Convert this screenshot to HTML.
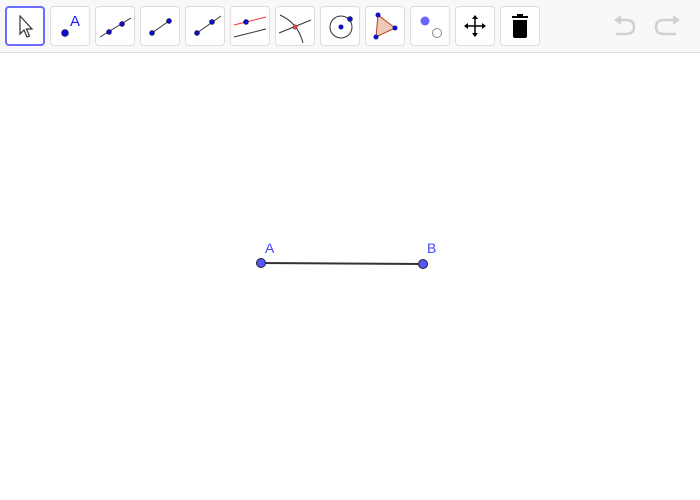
<!DOCTYPE html>
<html><head><style>
body{margin:0;width:700px;height:500px;background:#fff;font-family:"Liberation Sans",sans-serif;overflow:hidden;position:relative}
#tb{position:absolute;left:0;top:0;width:700px;height:52px;background:#f8f8f8;border-bottom:1px solid #ddd}
.b{position:absolute;top:6px;width:38px;height:38px;background:#fff;border:1px solid #ddd;border-radius:4px}
.b svg{position:absolute;left:0;top:0}
</style></head><body>
<div id="tb">
<div class="b" style="left:5px;border:2px solid #6b6bff;width:36px;height:36px;top:6px"><svg width="36" height="36"><path d="M13 8 L13 26 L17 22 L20 29 L22.5 28 L19.5 21 L25 21 Z" fill="#fff" stroke="#333" stroke-width="1.2"/></svg></div>
<div class="b" style="left:50px"><svg width="38" height="38"><circle cx="14" cy="26" r="3.5" fill="#1010cc" stroke="#000" stroke-width=".5"/><text x="19" y="19" fill="#1a1aff" font-size="15" font-family="Liberation Sans">A</text></svg></div>
<div class="b" style="left:95px"><svg width="38" height="38"><line x1="4" y1="30" x2="35" y2="11" stroke="#333"/><circle cx="13" cy="25" r="2.5" fill="#1010cc" stroke="#000" stroke-width=".5"/><circle cx="26" cy="17" r="2.5" fill="#1010cc" stroke="#000" stroke-width=".5"/></svg></div>
<div class="b" style="left:140px"><svg width="38" height="38"><line x1="11" y1="26" x2="28" y2="14" stroke="#333"/><circle cx="11" cy="26" r="2.5" fill="#1010cc" stroke="#000" stroke-width=".5"/><circle cx="28" cy="14" r="2.5" fill="#1010cc" stroke="#000" stroke-width=".5"/></svg></div>
<div class="b" style="left:185px"><svg width="38" height="38"><line x1="11" y1="26" x2="35" y2="9" stroke="#333"/><circle cx="11" cy="26" r="2.5" fill="#1010cc" stroke="#000" stroke-width=".5"/><circle cx="26" cy="15" r="2.5" fill="#1010cc" stroke="#000" stroke-width=".5"/></svg></div>
<div class="b" style="left:230px"><svg width="38" height="38"><line x1="3" y1="18" x2="35" y2="10" stroke="#e33"/><line x1="3" y1="30" x2="35" y2="22" stroke="#333"/><circle cx="15" cy="15" r="2.5" fill="#1010cc" stroke="#000" stroke-width=".5"/></svg></div>
<div class="b" style="left:275px"><svg width="38" height="38"><line x1="3" y1="26" x2="35" y2="13" stroke="#333"/><path d="M4 8 Q22 16 27 36" fill="none" stroke="#333"/><circle cx="19" cy="20" r="2.2" fill="#e44" stroke="#333" stroke-width=".5"/></svg></div>
<div class="b" style="left:320px"><svg width="38" height="38"><circle cx="20" cy="20" r="11" fill="none" stroke="#333"/><circle cx="20" cy="20" r="2.5" fill="#1010cc"/><circle cx="29" cy="12" r="2.5" fill="#1010cc" stroke="#000" stroke-width=".5"/></svg></div>
<div class="b" style="left:365px"><svg width="38" height="38"><path d="M12 8 L29 21 L10 30 Z" fill="#f0c8b8" stroke="#b04020"/><circle cx="12" cy="8" r="2.5" fill="#1010cc"/><circle cx="29" cy="21" r="2.5" fill="#1010cc"/><circle cx="10" cy="30" r="2.5" fill="#1010cc"/></svg></div>
<div class="b" style="left:410px"><svg width="38" height="38"><circle cx="14" cy="14" r="4.5" fill="#6666ff"/><circle cx="26" cy="26" r="4.5" fill="#fff" stroke="#888"/></svg></div>
<div class="b" style="left:455px"><svg width="38" height="38"><path d="M19 9 V29 M9 19 H29" stroke="#000" stroke-width="1.5"/><path d="M19 8 L16 12 H22Z M19 30 L16 26 H22Z M8 19 L12 16 V22Z M30 19 L26 16 V22Z" fill="#000"/></svg></div>
<div class="b" style="left:500px"><svg width="38" height="38"><rect x="11" y="9" width="16" height="2" fill="#000"/><rect x="16" y="7" width="6" height="2" fill="#000"/><path d="M12 13 H26 V29 Q26 31 24 31 H14 Q12 31 12 29Z" fill="#000"/></svg></div>
<svg style="position:absolute;left:612px;top:12px" width="70" height="28"><path d="M6 8 H14 Q22 8 22 15 Q22 22 14 22 H4" fill="none" stroke="#d0d0d0" stroke-width="2.5"/><path d="M2 8 L9 3 V13Z" fill="#d0d0d0"/><path d="M64 8 H52 Q44 8 44 15 Q44 22 52 22 H64" fill="none" stroke="#d0d0d0" stroke-width="2.5"/><path d="M68 8 L61 3 V13Z" fill="#d0d0d0"/></svg>
</div>
<svg style="position:absolute;left:0;top:0" width="700" height="500">
<line x1="261" y1="263" x2="423" y2="264" stroke="#333" stroke-width="2"/>
<circle cx="261" cy="263" r="4.5" fill="#5555ff" stroke="#222" stroke-width="1"/>
<circle cx="423" cy="264" r="4.5" fill="#5555ff" stroke="#222" stroke-width="1"/>
<text x="265" y="253" fill="#4444ff" font-size="14" font-family="Liberation Sans">A</text>
<text x="427" y="253" fill="#4444ff" font-size="14" font-family="Liberation Sans">B</text>
</svg>
</body></html>
